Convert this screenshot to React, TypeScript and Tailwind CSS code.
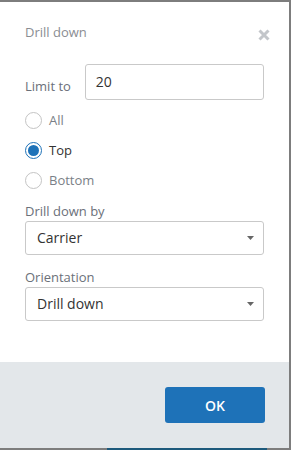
import React from 'react';

const Radio = ({ label, checked }: { label: string; checked?: boolean }) => (
  <label className="flex h-[30px] items-center gap-[7px]">
    <span
      className={`flex h-[17px] w-[17px] items-center justify-center rounded-full border ${
        checked ? 'border-[#1e72b8]' : 'border-[#c4c4c4]'
      } bg-white`}
    >
      {checked && <span className="h-[11px] w-[11px] rounded-full bg-[#1e72b8]" />}
    </span>
    <span className={`text-[13px] ${checked ? 'text-[#333]' : 'text-[#7a7f87]'}`}>{label}</span>
  </label>
);

const Select = ({ value }: { value: string }) => (
  <div className="flex h-[34px] items-center justify-between rounded-[3px] border border-[#c9c9c9] bg-white pl-[11px] pr-[9px]">
    <span className="text-[14px] text-[#333]">{value}</span>
    <svg width="7" height="4" viewBox="0 0 7 4">
      <path d="M0 0 H7 L3.5 4 Z" fill="#666" />
    </svg>
  </div>
);

const App = () => {
  return (
    <div
      className="flex h-[450px] w-[291px] flex-col bg-[#7d7d7d] pt-[2px]"
      style={{ fontFamily: '"Open Sans", "Noto Sans", sans-serif' }}
    >
      <div className="flex h-[446px] w-[289px] flex-col bg-white">
        <div className="flex h-[360px] flex-col px-[25px]">
          <div className="flex items-center justify-between pt-[21px]">
            <span className="text-[13px] text-[#8a8d92]">Drill down</span>
            <svg width="12" height="12" viewBox="0 0 12 12" className="mr-[-6px] mt-[5px]">
              <path d="M1.5 1.5 L10.5 10.5 M10.5 1.5 L1.5 10.5" stroke="#c3c6ca" strokeWidth="3" />
            </svg>
          </div>

          <div className="mt-[21px] flex items-end gap-[14px]">
            <span className="pb-[3px] text-[13px] text-[#6b7079]">Limit to</span>
            <div className="flex h-[36px] flex-1 items-center rounded-[3px] border border-[#c9c9c9] px-[10px] text-[14px] text-[#333]">
              20
            </div>
          </div>

          <div className="mt-[6px] flex flex-col">
            <Radio label="All" />
            <Radio label="Top" checked />
            <Radio label="Bottom" />
          </div>

          <div className="mt-[7px] text-[13px] leading-[17px] text-[#6b7079]">Drill down by</div>
          <div className="mt-[1px]">
            <Select value="Carrier" />
          </div>

          <div className="mt-[14px] text-[13px] leading-[17px] text-[#6b7079]">Orientation</div>
          <div className="mt-[1px]">
            <Select value="Drill down" />
          </div>
        </div>

        <div className="flex flex-1 items-start justify-end bg-[#e3e7ea] pr-[24px] pt-[25px]">
          <button className="h-[36px] w-[100px] rounded-[3px] bg-[#1e72b8] text-[14px] font-semibold text-white">
            OK
          </button>
        </div>
      </div>
      <div className="flex h-[2px] w-full">
        <div className="w-[107px] bg-[#7d7d7d]" />
        <div className="w-[160px] bg-[#1d5a7c]" />
      </div>
    </div>
  );
};

export default App;
